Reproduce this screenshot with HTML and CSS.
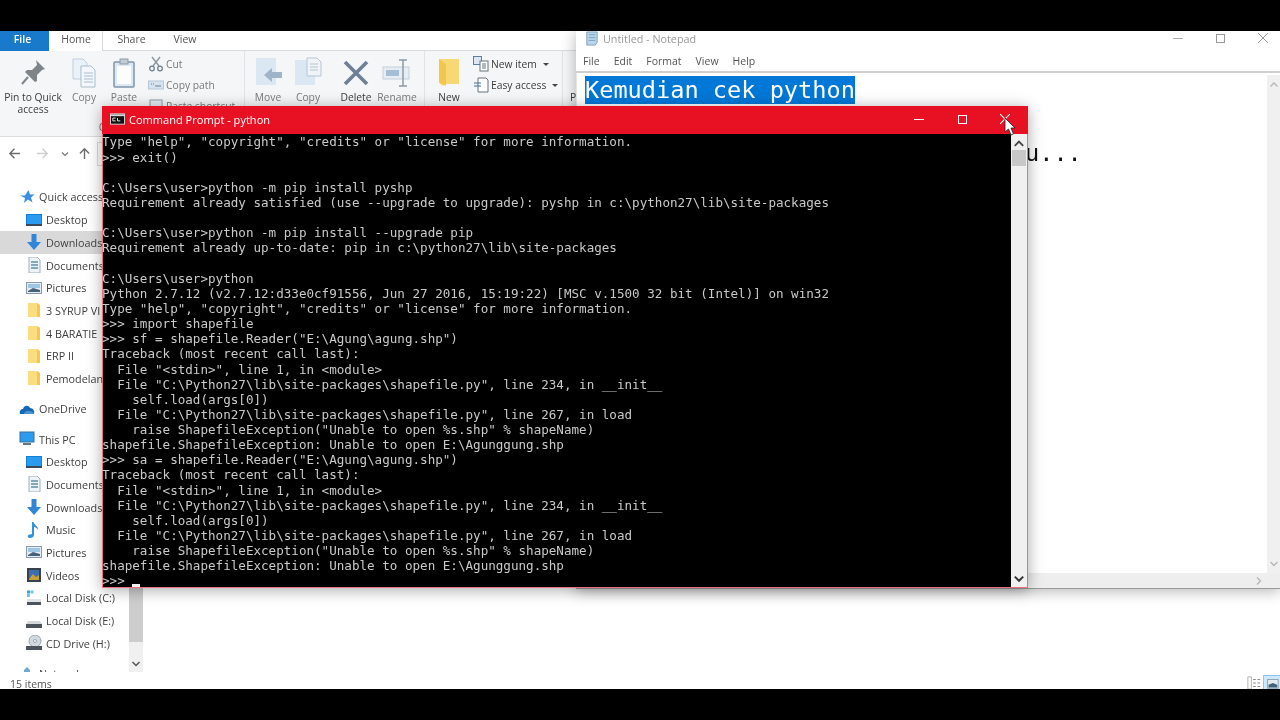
FILE: index.html
```html
<!DOCTYPE html>
<html lang="en">
<head>
<meta charset="utf-8">
<title>Command Prompt - python</title>
<link rel="stylesheet" href="styles.css">
</head>
<body>
<svg class="defs" width="0" height="0" aria-hidden="true">
  <symbol id="i-folder" viewBox="0 0 16 16"><path d="M2 1h9l3 2v12H2z" fill="#fbdc7f"/><path d="M11 1l3 2v12h-3z" fill="#f2c94f"/></symbol>
  <symbol id="i-desktop" viewBox="0 0 16 16"><rect x="0" y="2" width="16" height="11" fill="#0f7fd8"/><rect x="1" y="3" width="14" height="9" fill="#2b9bef"/><rect x="0" y="12" width="16" height="2" fill="#3b4a59"/></symbol>
  <symbol id="i-down" viewBox="0 0 16 16"><path d="M5.500 0h5v8H15l-7 8-7-8h4.500z" fill="#2f86d8"/></symbol>
  <symbol id="i-doc" viewBox="0 0 16 16"><path d="M3 0h8l3 3v13H3z" fill="#eef3f7" stroke="#9fb0bd"/><path d="M5 5h7M5 8h7M5 11h7" stroke="#5f8ea8" stroke-width="1.300"/></symbol>
  <symbol id="i-pic" viewBox="0 0 16 16"><rect x="0.500" y="2.500" width="15" height="11" fill="#e7edf2" stroke="#8a9aa8"/><path d="M2 4h12v4H2z" fill="#9cc6e4"/><path d="M2 11l5-3 7 2v2H2z" fill="#43637c"/></symbol>
  <symbol id="i-cloud" viewBox="0 0 16 16"><path d="M1 13c-1-3 1-5 3-5 1-4 6-4 7-1 3 0 5 3 4 6z" fill="#1667b5"/><path d="M5 13c0-2 2-3 4-3 3 0 6 1 6 3z" fill="#4d94d3"/></symbol>
  <symbol id="i-pc" viewBox="0 0 16 16"><rect x="1" y="1" width="14" height="10" fill="#2b9bef" stroke="#3b6e99"/><rect x="4" y="12" width="8" height="2" fill="#64798a"/></symbol>
  <symbol id="i-net" viewBox="0 0 16 16"><path d="M8 2l3 3v3l4 3v3H1v-3l4-3V5z" fill="#6fa9cf"/></symbol>
  <symbol id="i-music" viewBox="0 0 16 16"><path d="M6 0h1.500c.5 3 5 4 4.500 8-1-2-2.500-3-4-3v8c0 2-2 3-4 3s-3-2-1.500-3c1-1 2-1 3.500-.7z" fill="#2f93de"/></symbol>
  <symbol id="i-video" viewBox="0 0 16 16"><rect x="1" y="1" width="14" height="14" fill="#39414c"/><rect x="3" y="3" width="10" height="10" fill="#3d6fae"/><path d="M3 12l4-5 3 3 3-2v5H3z" fill="#c8a03a"/></symbol>
  <symbol id="i-diskc" viewBox="0 0 16 16"><rect x="1" y="0.500" width="3" height="3" fill="#29a3d9"/><rect x="4.500" y="0.500" width="3" height="3" fill="#6fc4e8"/><rect x="1" y="4" width="3" height="3" fill="#6fc4e8"/><path d="M1 9h14v5H1z" fill="#dfe3e6"/><rect x="1" y="12" width="14" height="3" fill="#4b545c"/></symbol>
  <symbol id="i-disk" viewBox="0 0 16 16"><path d="M2 8h12l2 3v4H0v-4z" fill="#d5d9dc"/><rect x="0" y="11" width="16" height="4" fill="#4b545c"/></symbol>
  <symbol id="i-cd" viewBox="0 0 16 16"><circle cx="9" cy="6" r="6" fill="#d2dae0" stroke="#98a4ad"/><circle cx="9" cy="6" r="1.500" fill="#fff" stroke="#98a4ad"/><rect x="0" y="11" width="16" height="4" fill="#4b545c"/></symbol>
</svg>

<div class="desk">
  <div class="letterbox"></div>
  <section class="explorer">
    <nav class="tabs">
      <span class="tab tab-file">File</span>
      <span class="tab tab-active">Home</span>
      <span class="tab">Share</span>
      <span class="tab">View</span>
    </nav>
    <div class="ribbon">
      <div class="group group-clip">
        <div class="group-body">
          <div class="big big-pin">
            <svg class="big-icon" viewBox="0 0 32 32"><path d="M19 3l9 9-3 1-5 5 0 6-2 1-10-10 2-2h5l5-5z" fill="#7f8488"/><path d="M11 20l-6 7" stroke="#7f8488" stroke-width="2"/></svg>
            <span class="label">Pin to Quick<br>access</span>
          </div>
          <div class="big big-copy dim">
            <svg class="big-icon" viewBox="0 0 32 32"><path d="M5 2h10l4 4v16H5z" fill="#eaf1f8" stroke="#bfd0e0"/><path d="M13 9h10l4 4v17H13z" fill="#f3f7fb" stroke="#a9bccd"/><path d="M16 16h9M16 19h9M16 22h9M16 25h9" stroke="#a9bccd"/></svg>
            <span class="label">Copy</span>
          </div>
          <div class="big big-paste dim">
            <svg class="big-icon" viewBox="0 0 32 32"><rect x="6" y="5" width="20" height="25" rx="1" fill="#dde8f2" stroke="#7d95ab" stroke-width="1.500"/><rect x="9" y="9" width="14" height="18" fill="#fbfcfd"/><rect x="12" y="2" width="8" height="5" fill="#c3ccd4" stroke="#8d9aa6"/></svg>
            <span class="label">Paste</span>
          </div>
          <div class="small-col">
            <div class="small dim">
              <svg class="small-icon" viewBox="0 0 16 16"><path d="M4 1l7 9M12 1L5 10" stroke="#8b97a2" stroke-width="1.400" fill="none"/><circle cx="4" cy="12.500" r="2.300" fill="none" stroke="#6e7f8d" stroke-width="1.300"/><circle cx="12" cy="12.500" r="2.300" fill="none" stroke="#6e7f8d" stroke-width="1.300"/></svg>
              <span>Cut</span>
            </div>
            <div class="small dim">
              <svg class="small-icon" viewBox="0 0 16 16"><rect x="0.500" y="4" width="15" height="8" fill="#d5e3f0" stroke="#b5c6d6"/><path d="M3 7h1M5 7h1M7 9h6" stroke="#6c7f91"/></svg>
              <span>Copy path</span>
            </div>
            <div class="small dim">
              <svg class="small-icon" viewBox="0 0 16 16"><rect x="2" y="2" width="12" height="13" fill="#e6edf3" stroke="#8d9aa6"/></svg>
              <span>Paste shortcut</span>
            </div>
          </div>
        </div>
        <span class="group-label">Clipboard</span>
      </div>
      <div class="group group-org">
        <div class="group-body">
          <div class="big big-move dim">
            <svg class="big-icon" viewBox="0 0 32 32"><rect x="4" y="1" width="20" height="27" fill="#dbe7f3"/><path d="M30 15H20v-4l-8 7 8 7v-4h10z" fill="#9fb4c9"/></svg>
            <span class="label">Move</span>
          </div>
          <div class="big big-copyto dim">
            <svg class="big-icon" viewBox="0 0 32 32"><rect x="3" y="3" width="20" height="25" fill="#dbe7f3"/><path d="M15 1h10l4 4v14H15z" fill="#f0f4f8" stroke="#b6c5d3"/><path d="M18 7h8M18 10h8M18 13h8" stroke="#b6c5d3"/></svg>
            <span class="label">Copy</span>
          </div>
          <div class="big big-del">
            <svg class="big-icon" viewBox="0 0 32 32"><path d="M5 5l22 22M27 5L5 27" stroke="#6f7f95" stroke-width="3.600"/></svg>
            <span class="label">Delete</span>
          </div>
          <div class="big big-ren dim">
            <svg class="big-icon" viewBox="0 0 32 32"><rect x="2" y="10" width="26" height="12" fill="#e6edf4" stroke="#c3ced8"/><rect x="5" y="13" width="13" height="6" fill="#a7bdd3"/><path d="M18 3h8M18 29h8M22 3v26" stroke="#8d9aa6" stroke-width="1.500"/></svg>
            <span class="label">Rename</span>
          </div>
        </div>
        <span class="group-label">Organize</span>
      </div>
      <div class="group group-new">
        <div class="group-body">
          <div class="big big-new">
            <svg class="big-icon" viewBox="0 0 32 32"><path d="M6 2h20v25H12l-2 2-4-3z" fill="#f8d775"/><path d="M6 2l7 5v22l-7-4z" fill="#f3c74d"/></svg>
            <span class="label">New</span>
          </div>
          <div class="small-col small-col-new">
            <div class="small">
              <svg class="small-icon" viewBox="0 0 16 16"><rect x="0.500" y="0.500" width="8" height="8" fill="#dce9f5" stroke="#5d7f9f"/><rect x="7" y="5" width="8" height="10" fill="#fff" stroke="#66747f"/><path d="M9 8h4M9 10h4M9 12h4" stroke="#66747f"/></svg>
              <span>New item</span><i class="caret"></i>
            </div>
            <div class="small">
              <svg class="small-icon" viewBox="0 0 16 16"><path d="M5 1h8l2 2v12H5z" fill="#fff" stroke="#66747f"/><path d="M1 6h7M1 9h7" stroke="#3f6f96" stroke-width="1.200"/></svg>
              <span>Easy access</span><i class="caret"></i>
            </div>
          </div>
        </div>
        <span class="group-label">New</span>
      </div>
      <div class="group group-open">
        <div class="group-body">
          <div class="big"><span class="big-icon"></span><span class="label">Properties</span></div>
        </div>
      </div>
    </div>
    <div class="navbar">
      <svg class="nav-icon nav-back" viewBox="0 0 14 14"><path d="M13 7H2M7 2L2 7l5 5" fill="none" stroke="#6d6d6d" stroke-width="1.500"/></svg>
      <svg class="nav-icon nav-fwd" viewBox="0 0 14 14"><path d="M1 7h11M7 2l5 5-5 5" fill="none" stroke="#cfcfcf" stroke-width="1.500"/></svg>
      <svg class="nav-small" viewBox="0 0 8 8"><path d="M1 2.500l3 3 3-3" fill="none" stroke="#777" stroke-width="1.200"/></svg>
      <svg class="nav-icon nav-up" viewBox="0 0 14 14"><path d="M7 13V2M2 7l5-5 5 5" fill="none" stroke="#6d6d6d" stroke-width="1.500"/></svg>
      <span class="address"></span>
    </div>
    <div class="main">
      <aside class="tree">
        <div class="tree-list">
          <div class="row head"><svg class="tree-icon" viewBox="0 0 16 16"><path d="M9.500 1l1.500 4.500h4.500l-3.500 3 1.500 5-4.500-3-4 3.500 1-5L1 6.500h5z" fill="#3b8fdc"/></svg>Quick access</div>
          <div class="row"><svg class="tree-icon"><use href="#i-desktop"/></svg>Desktop</div>
          <div class="row row-on"><svg class="tree-icon"><use href="#i-down"/></svg>Downloads</div>
          <div class="row"><svg class="tree-icon"><use href="#i-doc"/></svg>Documents</div>
          <div class="row"><svg class="tree-icon"><use href="#i-pic"/></svg>Pictures</div>
          <div class="row"><svg class="tree-icon"><use href="#i-folder"/></svg>3 SYRUP VI</div>
          <div class="row"><svg class="tree-icon"><use href="#i-folder"/></svg>4 BARATIE</div>
          <div class="row"><svg class="tree-icon"><use href="#i-folder"/></svg>ERP II</div>
          <div class="row"><svg class="tree-icon"><use href="#i-folder"/></svg>Pemodelan</div>
          <div class="row head sect"><svg class="tree-icon"><use href="#i-cloud"/></svg>OneDrive</div>
          <div class="row head sect"><svg class="tree-icon"><use href="#i-pc"/></svg>This PC</div>
          <div class="row"><svg class="tree-icon"><use href="#i-desktop"/></svg>Desktop</div>
          <div class="row"><svg class="tree-icon"><use href="#i-doc"/></svg>Documents</div>
          <div class="row"><svg class="tree-icon"><use href="#i-down"/></svg>Downloads</div>
          <div class="row"><svg class="tree-icon"><use href="#i-music"/></svg>Music</div>
          <div class="row"><svg class="tree-icon"><use href="#i-pic"/></svg>Pictures</div>
          <div class="row"><svg class="tree-icon"><use href="#i-video"/></svg>Videos</div>
          <div class="row"><svg class="tree-icon"><use href="#i-diskc"/></svg>Local Disk (C:)</div>
          <div class="row"><svg class="tree-icon"><use href="#i-disk"/></svg>Local Disk (E:)</div>
          <div class="row"><svg class="tree-icon"><use href="#i-cd"/></svg>CD Drive (H:)</div>
          <div class="row head sect"><svg class="tree-icon"><use href="#i-net"/></svg>Network</div>
        </div>
        <div class="tree-scroll">
          <span class="tree-thumb"></span>
          <svg class="tree-arrow" viewBox="0 0 10 10"><path d="M1.500 3l3.500 3.500L8.500 3" fill="none" stroke="#555" stroke-width="1.500"/></svg>
        </div>
      </aside>
    </div>
    <footer class="status">
      <span class="count">15 items</span>
      <span class="views">
        <svg class="view" viewBox="0 0 16 16"><path d="M1 1h4v14H1z" fill="none" stroke="#aaa"/><path d="M7 4h3M12 4h3M7 8h3M12 8h3M7 12h3M12 12h3" stroke="#777"/></svg>
        <svg class="view view-on" viewBox="0 0 16 16"><rect x="3" y="4" width="12" height="10" fill="#e4ebf1" stroke="#8a9aa8"/><path d="M4 10l5-2 5 2v3H4z" fill="#43637c"/></svg>
      </span>
    </footer>
  </section>
  <div class="letterbox"></div>

  <section class="notepad">
    <header class="np-title">
      <svg class="np-icon" viewBox="0 0 16 16"><path d="M3 1h11v11l-2 3H3z" fill="#b9d7ea" stroke="#7f9fb5"/><path d="M5 4h7M5 7h7M5 10h7" stroke="#7f9fb5"/></svg>
      <span class="np-name">Untitled - Notepad</span>
      <span class="np-btns">
        <i class="np-min"></i>
        <i class="np-max"></i>
        <svg class="np-close" viewBox="0 0 10 10"><path d="M0 0l10 10M10 0L0 10" stroke="#9a9a9a"/></svg>
      </span>
    </header>
    <nav class="np-menu"><span>File</span><span>Edit</span><span>Format</span><span>View</span><span>Help</span></nav>
    <div class="np-body">
      <div class="np-text">
        <div class="np-line"><mark class="np-sel">Kemudian cek python</mark></div>
        <div class="np-line">&nbsp;</div>
        <div class="np-line np-tail">u...</div>
      </div>
      <div class="np-vscroll">
        <svg class="np-arrow" viewBox="0 0 10 10"><path d="M1.500 6.500L5 3l3.500 3.500" fill="none" stroke="#b5b5b5" stroke-width="1.300"/></svg>
        <svg class="np-arrow" viewBox="0 0 10 10"><path d="M1.500 3L5 6.500 8.500 3" fill="none" stroke="#b5b5b5" stroke-width="1.300"/></svg>
      </div>
    </div>
    <div class="np-hscroll">
      <svg class="np-arrow" viewBox="0 0 10 10"><path d="M3 1.500L6.500 5 3 8.500" fill="none" stroke="#b5b5b5" stroke-width="1.300"/></svg>
    </div>
  </section>

  <section class="cmd">
    <header class="cmd-title">
      <svg class="cmd-icon" viewBox="0 0 16 12"><rect x="0.500" y="0.500" width="15" height="11" fill="#111" stroke="#d8d8d8"/><rect x="1" y="1" width="14" height="2" fill="#d8d8d8"/><path d="M3 5h3M3 5v3h3M8 5v3h3" fill="none" stroke="#eee"/></svg>
      <span class="cmd-name">Command Prompt - python</span>
      <span class="cmd-btns">
        <i class="cmd-min"></i>
        <i class="cmd-max"></i>
        <svg class="cmd-close" viewBox="0 0 10 10"><path d="M0 0l10 10M10 0L0 10" stroke="#fff" stroke-width="1.100"/></svg>
      </span>
    </header>
    <div class="cmd-body">
<pre class="term">Type "help", "copyright", "credits" or "license" for more information.
&gt;&gt;&gt; exit()

C:\Users\user&gt;python -m pip install pyshp
Requirement already satisfied (use --upgrade to upgrade): pyshp in c:\python27\lib\site-packages

C:\Users\user&gt;python -m pip install --upgrade pip
Requirement already up-to-date: pip in c:\python27\lib\site-packages

C:\Users\user&gt;python
Python 2.7.12 (v2.7.12:d33e0cf91556, Jun 27 2016, 15:19:22) [MSC v.1500 32 bit (Intel)] on win32
Type "help", "copyright", "credits" or "license" for more information.
&gt;&gt;&gt; import shapefile
&gt;&gt;&gt; sf = shapefile.Reader("E:\Agung\agung.shp")
Traceback (most recent call last):
  File "&lt;stdin&gt;", line 1, in &lt;module&gt;
  File "C:\Python27\lib\site-packages\shapefile.py", line 234, in __init__
    self.load(args[0])
  File "C:\Python27\lib\site-packages\shapefile.py", line 267, in load
    raise ShapefileException("Unable to open %s.shp" % shapeName)
shapefile.ShapefileException: Unable to open E:\Agunggung.shp
&gt;&gt;&gt; sa = shapefile.Reader("E:\Agung\agung.shp")
Traceback (most recent call last):
  File "&lt;stdin&gt;", line 1, in &lt;module&gt;
  File "C:\Python27\lib\site-packages\shapefile.py", line 234, in __init__
    self.load(args[0])
  File "C:\Python27\lib\site-packages\shapefile.py", line 267, in load
    raise ShapefileException("Unable to open %s.shp" % shapeName)
shapefile.ShapefileException: Unable to open E:\Agunggung.shp
&gt;&gt;&gt; <span class="caret-block"></span></pre>
      <div class="cmd-scroll">
        <svg class="cmd-arrow" viewBox="0 0 10 10"><path d="M1.500 6.500L5 3l3.500 3.500" fill="none" stroke="#444" stroke-width="1.500"/></svg>
        <span class="cmd-thumb"></span>
        <svg class="cmd-arrow cmd-arrow-down" viewBox="0 0 10 10"><path d="M1.500 3L5 6.500 8.500 3" fill="none" stroke="#333" stroke-width="1.600"/></svg>
      </div>
    </div>
  </section>

  <svg class="pointer" viewBox="0 0 12 19"><path d="M1 1v14l3.500-3 2.500 6 2.500-1-2.500-6H11z" fill="#fff" stroke="#222" stroke-width="0.800"/></svg>
</div>
</body>
</html>
```
FILE: styles.css
```css
* { box-sizing: border-box; }
html, body { margin: 0; padding: 0; background: #000; }
body { width: 1280px; height: 720px; overflow: hidden; font-family: "Open Sans", "Noto Sans", sans-serif; }
.defs { position: absolute; }
.desk { position: relative; width: 1280px; height: 720px; display: flex; flex-direction: column; overflow: hidden; filter: blur(0.35px); }
.letterbox { height: 31px; flex: none; background: #000; position: relative; z-index: 5; }

.explorer { height: 658px; flex: none; background: #fff; display: flex; flex-direction: column; overflow: hidden; color: #3c3c3c; }

.tabs { height: 20px; flex: none; display: flex; font-size: 10.500px; border-bottom: 1px solid #dadbdc; color: #555; }
.tab { width: 49px; text-align: center; line-height: 17px; }
.tab:nth-child(3) { width: 57px; }
.tab:nth-child(4) { width: 50px; }
.tab-file { background: #1979ca; color: #fff; font-weight: 600; height: 20px; padding-right: 4px; }
.tab-active { width: 54px; background: #fff; height: 20px; border-right: 1px solid #dadbdc; padding-left: 1px; }

.ribbon { height: 86px; flex: none; background: #f5f6f7; border-bottom: 1px solid #dadbdc; display: flex; font-size: 10.300px; }
.group { display: flex; flex-direction: column; border-right: 1px solid #e2e3e4; padding-top: 6px; }
.group-clip { width: 245px; }
.group-org { width: 180px; }
.group-new { width: 138px; }
.group-open { width: 100px; border-right: 0; }
.group-body { display: flex; flex: 1; }
.group-open .group-body { padding-left: 7px; }
.group-label { height: 14px; margin-bottom: 2px; line-height: 14px; text-align: center; color: #777; }
.big { display: flex; flex-direction: column; align-items: center; text-align: center; line-height: 12px; }
.big-icon { width: 32px; height: 32px; flex: none; margin-bottom: 2px; }
.big .label { display: block; }
.dim { color: #7a7a7a; }
.big-pin { width: 66px; color: #3c3c3c; }
.big-copy { width: 36px; }
.big-paste { width: 44px; }
.big-move { width: 44px; margin-left: 1px; }
.big-copyto { width: 36px; }
.big-del { width: 50px; margin-left: 5px; color: #3c3c3c; }
.big-ren { width: 36px; margin-left: -2px; }
.big-new { width: 48px; margin-left: 0; color: #3c3c3c; }
.small-col { display: flex; flex-direction: column; padding-left: 2px; gap: 5px; margin-top: -1px; }
.small-col-new { padding-left: 0; }
.small { display: flex; align-items: center; gap: 2px; height: 16px; white-space: nowrap; }
.small-icon { width: 16px; height: 16px; flex: none; }
.caret { width: 0; height: 0; border: 3px solid transparent; border-top-color: #444; border-bottom: 0; margin-left: 4px; }

.navbar { height: 33px; flex: none; display: flex; align-items: center; padding-left: 8px; }
.nav-icon { width: 13px; height: 13px; flex: none; }
.nav-fwd { margin-left: 15px; }
.nav-small { width: 8px; height: 8px; margin-left: 12px; }
.nav-up { margin-left: 9px; }
.address { width: 200px; height: 24px; margin-left: 6px; border: 1px solid #d9d9d9; }

.main { flex: 1; min-height: 0; display: flex; }
.tree { width: 143px; display: flex; overflow: hidden; }
.tree-list { flex: 1; padding-top: 15.600px; font-size: 10.800px; overflow: hidden; }
.row { height: 22.700px; display: flex; align-items: center; gap: 4px; padding-left: 26px; white-space: nowrap; overflow: hidden; color: #3f3f3f; }
.row.head { padding-left: 19px; }
.row.sect { margin-top: 7.600px; }
.row-on { background: #d9d9d9; }
.tree-icon { width: 16px; height: 16px; flex: none; }
.tree-scroll { width: 14px; flex: none; background: #f0f0f0; display: flex; flex-direction: column; align-items: center; }
.tree-thumb { width: 14px; flex: 1; background: #cdcdcd; margin-top: 12px; margin-bottom: 17px; }
.tree-arrow { width: 10px; height: 10px; margin-bottom: 3px; }

.status { height: 17px; flex: none; display: flex; justify-content: space-between; align-items: flex-end; padding-left: 10px; font-size: 10.500px; line-height: 14px; color: #555; }
.count { margin-bottom: -2px; }
.views { display: flex; gap: 2px; margin-bottom: -1px; }
.view { width: 16px; height: 14px; }
.view-on { background: #cde8f8; outline: 1px solid #8fc6e8; }

.notepad { position: absolute; left: 576px; top: 31px; width: 704px; height: 558px; background: #fff; display: flex; flex-direction: column; border-bottom: 1px solid #9a9a9a; box-shadow: 0 2px 14px rgba(0,0,0,.3); z-index: 1; }
.np-title { height: 21px; flex: none; display: flex; align-items: center; padding: 0 0 7px 8px; font-size: 10.800px; color: #9a9a9a; }
.np-icon { width: 15px; height: 15px; margin-right: 4px; }
.np-name { flex: 1; }
.np-btns { display: flex; align-items: center; gap: 33px; margin-right: 12px; }
.np-min { width: 10px; height: 1px; background: #aaa; }
.np-max { width: 9px; height: 9px; border: 1px solid #999; }
.np-close { width: 10px; height: 10px; }
.np-menu { height: 20px; flex: none; display: flex; align-items: center; padding: 0 0 2px 7px; font-size: 10.500px; color: #555; margin-top: 1px; border-bottom: 2px solid #cfcfcf; }
.np-menu span { margin-right: 14px; }
.np-body { flex: 1; min-height: 0; display: flex; padding-top: 2px; border-left: 1px solid #e6e6e6; }
.np-text { flex: 1; padding: 0 0 0 8px; font-family: "DejaVu Sans Mono", monospace; font-size: 23.600px; line-height: 31.500px; color: #111; }
.np-line { height: 31.500px; white-space: pre; }
.np-sel { background: #0078d7; color: #fff; display: inline-block; height: 28px; line-height: 28px; }
.np-tail { padding-left: 440px; }
.np-vscroll { width: 13px; flex: none; background: #f0f0f0; display: flex; flex-direction: column; justify-content: space-between; align-items: center; padding: 5px 0 4px; }
.np-hscroll { height: 15px; flex: none; background: #eeeeee; display: flex; justify-content: flex-end; align-items: center; padding-right: 16px; }
.np-arrow { width: 10px; height: 10px; }

.cmd { position: absolute; left: 102px; top: 106px; width: 926px; height: 482px; display: flex; flex-direction: column; background: #000; border: 1px solid #e8707c; border-top: 0; box-shadow: 0 2px 14px rgba(0,0,0,.35); z-index: 2; }
.cmd-title { height: 28px; flex: none; margin: 0 -1px; background: #e81123; display: flex; align-items: center; padding: 0 0 2px 8px; color: #fff; font-size: 11.050px; }
.cmd-icon { width: 15px; height: 12px; margin-right: 4px; }
.cmd-name { flex: 1; }
.cmd-btns { display: flex; align-items: center; gap: 33.500px; margin-right: 18px; }
.cmd-min { width: 10px; height: 1px; background: #fff; }
.cmd-max { width: 9px; height: 9px; border: 1px solid #fff; }
.cmd-close { width: 10px; height: 10px; }
.cmd-body { flex: 1; min-height: 0; display: flex; }
.term { flex: 1; margin: 0 0 0 -1px; padding: 0.400px 0 0; font-family: "DejaVu Sans Mono", monospace; font-size: 12.580px; line-height: 15.140px; color: #c9c9c9; overflow: hidden; }
.caret-block { display: inline-block; width: 8px; height: 3px; background: #f2f2f2; vertical-align: -2px; }
.cmd-scroll { width: 16px; flex: none; background: #f0f0f0; display: flex; flex-direction: column; align-items: center; padding-top: 4px; }
.cmd-arrow { width: 12px; height: 12px; flex: none; }
.cmd-thumb { width: 14px; height: 16px; background: #c8c8c8; }
.cmd-arrow-down { margin-top: auto; margin-bottom: 2px; }

.pointer { position: absolute; left: 1004px; top: 117px; width: 12px; height: 19px; z-index: 3; }
```
